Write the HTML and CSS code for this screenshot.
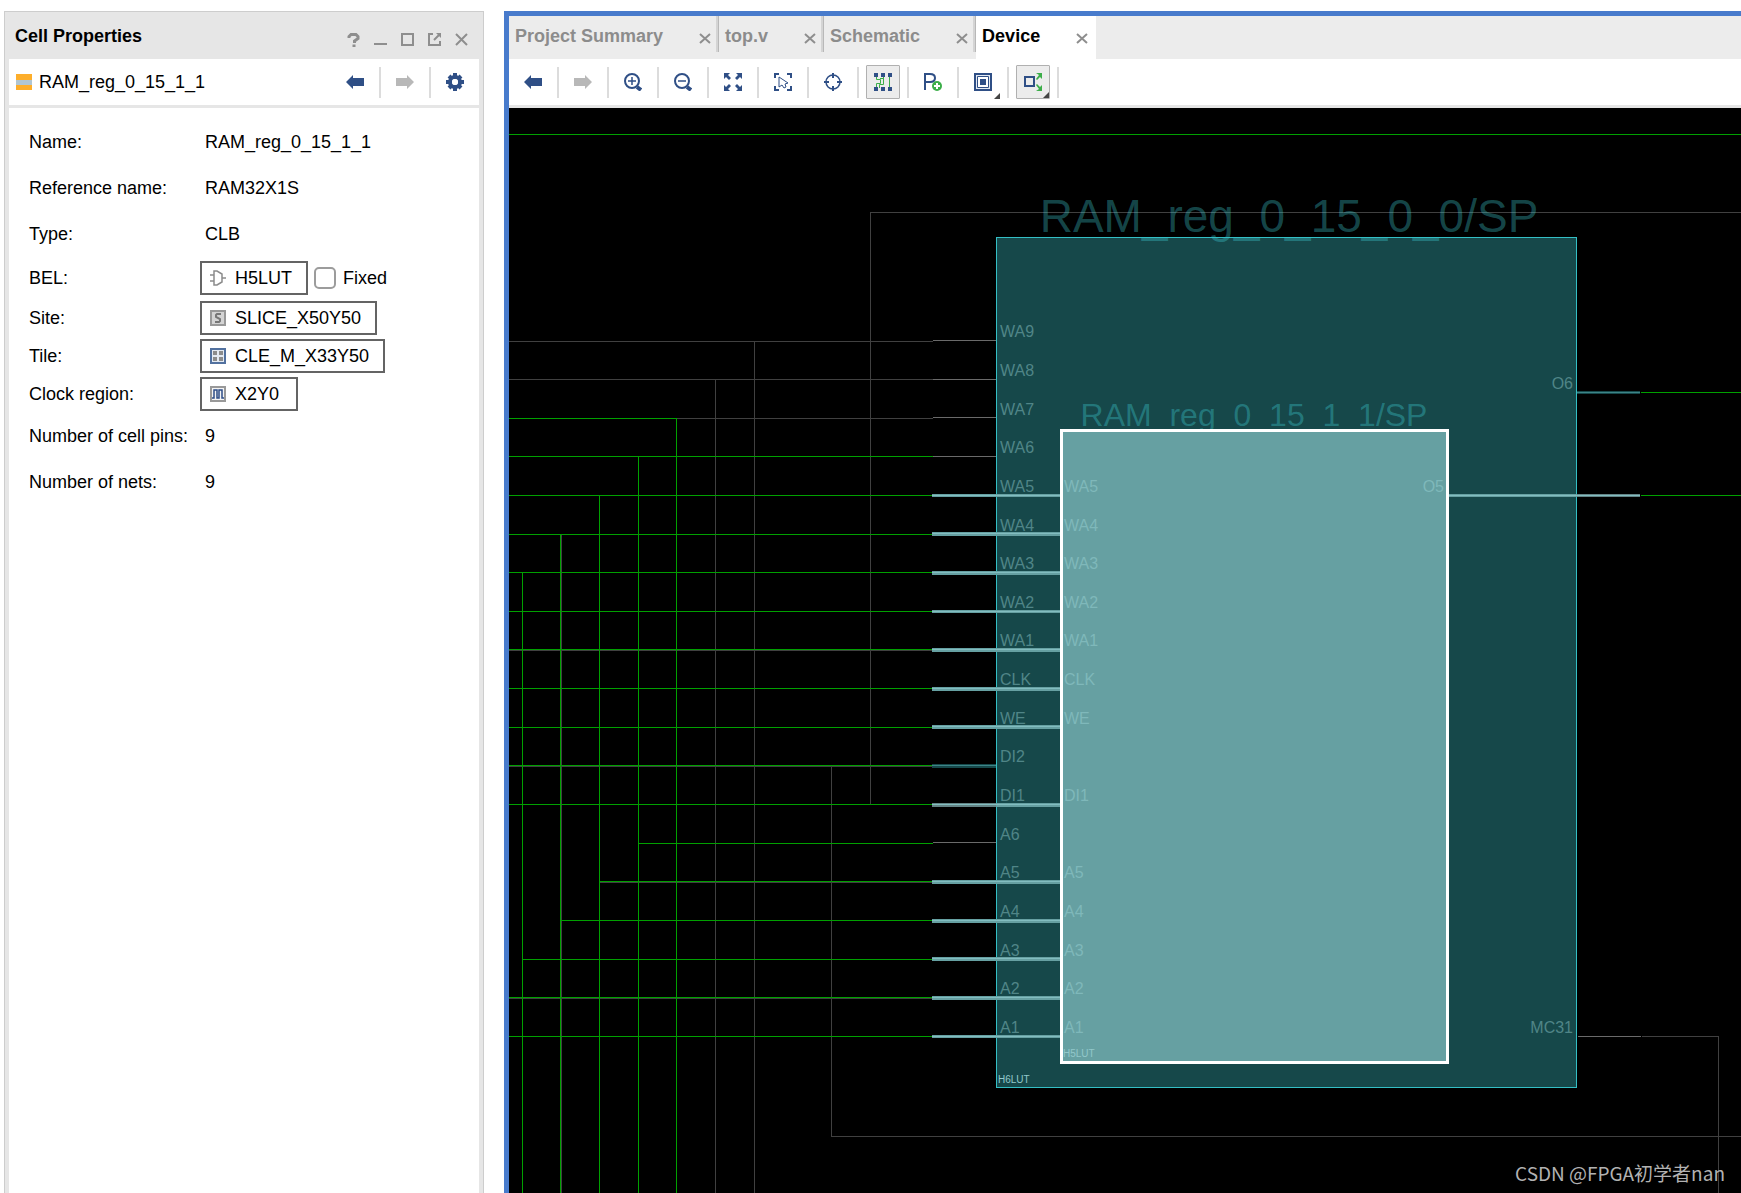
FILE: index.html
```html
<!DOCTYPE html>
<html lang="en">
<head>
<meta charset="utf-8">
<title>Device - Cell Properties</title>
<link rel="stylesheet" href="styles.css">
</head>
<body>
<svg class="defs" aria-hidden="true">
  <symbol id="arrow-left" viewBox="0 0 18 18"><path d="M0 9 7 2v3h11v8H7v3z"/></symbol>
  <symbol id="arrow-right" viewBox="0 0 18 18"><path d="M18 9 11 2v3H0v8h11v3z"/></symbol>
  <symbol id="close" viewBox="0 0 14 14"><path d="M2 3l10 9M12 3 2 12" fill="none" stroke="currentColor" stroke-width="2"/></symbol>
</svg>
<main class="app">
  <section class="panel">
    <header class="panel-head">
      <h2 class="panel-title">Cell Properties</h2>
      <div class="panel-tools">
        <button class="tool" aria-label="Help"><svg width="13" height="14" viewBox="0 0 13 14"><path d="M2 5V3.500L4 1.500h5l2 2v2L7.500 8v2M7 11.500v2.500" fill="none" stroke="currentColor" stroke-width="3"/></svg></button>
        <button class="tool" aria-label="Minimize"><svg width="13" height="13"><path d="M0 10h13v2H0z"/></svg></button>
        <button class="tool" aria-label="Maximize"><svg width="13" height="13"><path d="M1 1h11v11H1z" fill="none" stroke="currentColor" stroke-width="2"/></svg></button>
        <button class="tool" aria-label="Float"><svg width="13" height="13"><path d="M5 1H1v11h11V8M6 7l5-5" fill="none" stroke="currentColor" stroke-width="2"/><path d="M8 0h5v5z"/></svg></button>
        <button class="tool" aria-label="Close"><svg width="13" height="13"><path d="M1 1l11 11M12 1 1 12" fill="none" stroke="currentColor" stroke-width="2"/></svg></button>
      </div>
    </header>
    <div class="toolbar">
      <svg class="cell-icon" width="16" height="16"><path d="M0 0h16v16H0z" fill="#fdae2b"/><path d="M0 6h16v5H0z" fill="#b0c6d3"/></svg>
      <span class="cell-name">RAM_reg_0_15_1_1</span>
      <button class="btn" aria-label="Previous object"><svg width="18" height="18"><use href="#arrow-left"/></svg></button>
      <span class="sep"></span>
      <button class="btn" aria-label="Next object" disabled><svg width="18" height="18"><use href="#arrow-right"/></svg></button>
      <span class="sep"></span>
      <button class="btn" aria-label="Settings"><svg width="18" height="18" viewBox="0 0 18 18"><circle cx="9" cy="9" r="5" fill="none" stroke="currentColor" stroke-width="4"/><path d="M9 0v4M9 14v4M0 9h4M14 9h4M3 3l2 2M13 13l2 2M15 3l-2 2M5 13l-2 2" stroke="currentColor" stroke-width="4"/><circle cx="9" cy="9" r="3" fill="#fff"/></svg></button>
    </div>
    <dl class="props">
      <div class="row"><dt>Name:</dt><dd class="text">RAM_reg_0_15_1_1</dd></div>
      <div class="row"><dt>Reference name:</dt><dd class="text">RAM32X1S</dd></div>
      <div class="row"><dt>Type:</dt><dd class="text">CLB</dd></div>
      <div class="row row-bel"><dt>BEL:</dt><dd>
        <button class="chip"><svg width="16" height="16"><path d="M4 1v14h3l5-3V4L7 1zM0 5h4M0 11h4M12 8h4" fill="none" stroke="#8c8c8c" stroke-width="1.500"/></svg>H5LUT</button>
        <label class="check"><input type="checkbox">Fixed</label>
      </dd></div>
      <div class="row row-chip"><dt>Site:</dt><dd>
        <button class="chip"><svg width="16" height="16"><path d="M1 1h14v14H1z" fill="#d4d4d4" stroke="#999" stroke-width="2"/><path d="M11 4H7L6 5v2l4 2v2l-1 1H5" fill="none" stroke="#777" stroke-width="2"/></svg>SLICE_X50Y50</button>
      </dd></div>
      <div class="row row-chip"><dt>Tile:</dt><dd>
        <button class="chip"><svg width="16" height="16"><path d="M1 1h14v14H1z" fill="#e4eaf2" stroke="#52719f" stroke-width="2"/><path d="M3 3h4v4H3zM9 3h4v4H9zM3 9h4v4H3zM9 9h4v4H9z" fill="#8c8c8c"/></svg>CLE_M_X33Y50</button>
      </dd></div>
      <div class="row row-chip"><dt>Clock region:</dt><dd>
        <button class="chip"><svg width="16" height="16"><path d="M1 1h14v14H1z" fill="#f4f4f4" stroke="#999" stroke-width="2"/><path d="M2 12h2V4h3v8h2V4h3v8h2" fill="none" stroke="#2d4c86" stroke-width="1.500"/></svg>X2Y0</button>
      </dd></div>
      <div class="row"><dt>Number of cell pins:</dt><dd class="text">9</dd></div>
      <div class="row"><dt>Number of nets:</dt><dd class="text">9</dd></div>
    </dl>
  </section>

  <section class="editor">
    <nav class="tabs">
      <div class="tab"><a href="#summary">Project Summary</a><button class="tool" aria-label="Close Project Summary"><svg width="14" height="14"><use href="#close"/></svg></button></div>
      <div class="tab"><a href="#top">top.v</a><button class="tool" aria-label="Close top.v"><svg width="14" height="14"><use href="#close"/></svg></button></div>
      <div class="tab"><a href="#schematic">Schematic</a><button class="tool" aria-label="Close Schematic"><svg width="14" height="14"><use href="#close"/></svg></button></div>
      <div class="tab tab-active"><a href="#device">Device</a><button class="tool" aria-label="Close Device"><svg width="14" height="14"><use href="#close"/></svg></button></div>
    </nav>
    <div class="toolbar">
      <button class="btn" aria-label="Back"><svg width="18" height="18"><use href="#arrow-left"/></svg></button>
      <span class="sep"></span>
      <button class="btn" aria-label="Forward" disabled><svg width="18" height="18"><use href="#arrow-right"/></svg></button>
      <span class="sep"></span>
      <button class="btn" aria-label="Zoom in"><svg width="18" height="18"><circle cx="8" cy="8" r="7" fill="none" stroke="currentColor" stroke-width="2"/><path d="M8 4v8M4 8h8" stroke="currentColor" stroke-width="1.500"/><path d="M13 14l4 3" stroke="currentColor" stroke-width="4"/></svg></button>
      <span class="sep"></span>
      <button class="btn" aria-label="Zoom out"><svg width="18" height="18"><circle cx="8" cy="8" r="7" fill="none" stroke="currentColor" stroke-width="2"/><path d="M4 8h8" stroke="currentColor" stroke-width="1.500"/><path d="M13 14l4 3" stroke="currentColor" stroke-width="4"/></svg></button>
      <span class="sep"></span>
      <button class="btn" aria-label="Zoom fit"><svg width="18" height="18"><path d="M0 0h6L4 2l3 3-2 2-3-3-2 2zM18 0h-6l2 2-3 3 2 2 3-3 2 2zM0 18h6l-2-2 3-3-2-2-3 3-2-2zM18 18h-6l2-2-3-3 2-2 3 3 2-2z"/></svg></button>
      <span class="sep"></span>
      <button class="btn" aria-label="Zoom to selection"><svg width="18" height="18"><path d="M1 5V1h4M13 1h4v4M1 13v4h4M13 17h4v-4" fill="none" stroke="currentColor" stroke-width="2"/><path d="M5 4v10l3-2 2 3 2-1-1-3 3-1z" fill="#fff" stroke="currentColor"/></svg></button>
      <span class="sep"></span>
      <button class="btn" aria-label="Auto-fit selection"><svg width="18" height="18"><circle cx="9" cy="9" r="7" fill="none" stroke="currentColor" stroke-width="1.500"/><path d="M9 0v5M9 13v5M0 9h5M13 9h5" stroke="currentColor" stroke-width="2"/></svg></button>
      <span class="sep"></span>
      <button class="btn btn-on" aria-label="Routing resources"><svg width="18" height="18"><path d="M2.500 3v3.500h4v4h-4V15M9.500 3v8.500h-4V15M6 5.500h3M15.500 3v12" fill="none" stroke="#3cae49" stroke-width="1"/><path d="M0 0h4v4H0zM7 0h4v4H7zM14 0h4v4h-4zM0 14h4v4H0zM7 14h4v4H7zM14 14h4v4h-4z"/></svg></button>
      <span class="sep"></span>
      <button class="btn" aria-label="Place cell"><svg width="18" height="18"><path d="M1 17V1h5q5 0 5 4t-5 4H1" fill="none" stroke="currentColor" stroke-width="2"/><circle cx="13" cy="13" r="5" fill="#3cae49"/><path d="M13 10v6M10 13h6" stroke="#fff" stroke-width="2"/></svg></button>
      <span class="sep"></span>
      <button class="btn menu" aria-label="Show"><svg width="18" height="18"><path d="M1 1h16v16H1z" fill="#e4eaf2" stroke="currentColor" stroke-width="2"/><path d="M3.500 3.500h11v11h-11z" fill="#fff" stroke="currentColor" stroke-width="1"/><path d="M6 6h6v6H6z"/></svg></button>
      <span class="sep"></span>
      <button class="btn btn-on menu" aria-label="Cell connections"><svg width="18" height="18"><path d="M1 4h9v9H1z" fill="none" stroke="currentColor" stroke-width="2"/><path d="M12 0h6v6l-2-2-3 3-1-1 3-4zM12 18h6v-6l-2 2-3-3-1 1 3 4z" fill="#3cae49"/></svg></button>
      <span class="sep"></span>
    </div>
    <div class="canvas">
      <svg class="device" role="img" aria-label="Device view">
        <g transform="translate(-508.500 -107.500)" class="nets">
          <path class="net-off" d="M508 341H932M508 379H932M676 418H932M508 650H932M508 766H932M599 882H932M508 998H932M561 534V5000M715 379V5000M754 341V5000M870 804V212H5000M831 766V1136H5000M1641 1036H1718V5000"/>
          <path class="net-on" d="M508 134H5000M508 418H676V5000M508 456H932M508 495H932M508 534H932M508 572H932M508 611H932M508 649H932M508 688H932M508 727H932M508 765H932M508 804H932M638 843H932M599 881H932M560 920H932M522 959H932M508 997H932M508 1036H932M522 572V5000M560 534V5000M599 495V5000M638 456V5000M1640 392H5000M1640 495H5000"/>
          <path class="pin-off" d="M932 340H995M932 379H995M932 417H995M932 456H995M932 842H995M1577 1036H1640"/>
        </g>
        <g transform="translate(-509 -108)">
          <text class="title title-outer" x="1289" y="232">RAM_reg_0_15_0_0/SP</text>
          <path class="lut-fill" d="M996 237h581v851H996z"/>
          <text class="title title-inner" x="1254" y="426">RAM_reg_0_15_1_1/SP</text>
          <path class="lut-edge" d="M996 237h581v851H996zM997 238v849h579V238z"/>
          <path class="pin-on" d="M932 494h128v3H932zM932 532h128v4H932zM932 571h128v4H932zM932 610h128v3H932zM932 648h128v4H932zM932 687h128v4H932zM932 725h128v4H932zM932 803h128v4H932zM932 880h128v4H932zM932 919h128v4H932zM932 957h128v4H932zM932 996h128v4H932zM932 1035h128v3H932zM1449 494h191v3H1449z"/>
          <path class="pin-muted" d="M932 803h64v4h-64zM1577 494h63v3h-63z"/>
          <path class="pin-core" d="M932 495h128v1H932zM932 533h128v1H932zM932 572h128v1H932zM932 611h128v1H932zM932 649h128v1H932zM932 688h128v1H932zM932 726h128v1H932zM932 804h128v1H932zM932 881h128v1H932zM932 920h128v1H932zM932 958h128v1H932zM932 997h128v1H932zM932 1036h128v1H932zM1449 495h191v1H1449z"/>
          <path class="pin-dark" d="M932 764h64v4h-64zM1577 391h63v3h-63z"/>
          <path class="pin-dark-core" d="M932 765h64v1h-64zM1577 392h63v1h-63z"/>
          <path class="bel-edge" d="M1060 429h389v635h-389z"/>
          <path class="bel-fill" d="M1063 432h383v629h-383z"/>
          <g class="label">
            <text x="1000" y="337">WA9</text><text x="1000" y="376">WA8</text><text x="1000" y="415">WA7</text><text x="1000" y="453">WA6</text>
            <text x="1000" y="492">WA5</text><text x="1000" y="531">WA4</text><text x="1000" y="569">WA3</text><text x="1000" y="608">WA2</text><text x="1000" y="646">WA1</text>
            <text x="1000" y="685">CLK</text><text x="1000" y="724">WE</text><text x="1000" y="762">DI2</text><text x="1000" y="801">DI1</text><text x="1000" y="840">A6</text>
            <text x="1000" y="878">A5</text><text x="1000" y="917">A4</text><text x="1000" y="956">A3</text><text x="1000" y="994">A2</text><text x="1000" y="1033">A1</text>
            <text class="end" x="1573" y="389">O6</text><text class="end" x="1573" y="1033">MC31</text>
          </g>
          <g class="label label-inner">
            <text x="1064" y="492">WA5</text><text x="1064" y="531">WA4</text><text x="1064" y="569">WA3</text><text x="1064" y="608">WA2</text><text x="1064" y="646">WA1</text>
            <text x="1064" y="685">CLK</text><text x="1064" y="724">WE</text><text x="1064" y="801">DI1</text>
            <text x="1064" y="878">A5</text><text x="1064" y="917">A4</text><text x="1064" y="956">A3</text><text x="1064" y="994">A2</text><text x="1064" y="1033">A1</text>
            <text class="end" x="1444" y="492">O5</text>
          </g>
          <text class="bel-name" x="1063" y="1057">H5LUT</text>
          <text class="bel-name" x="998" y="1083">H6LUT</text>
        </g>
      </svg>
      <span class="watermark">CSDN @FPGA初学者nan</span>
    </div>
  </section>
</main>
</body>
</html>
```
FILE: styles.css
```css
* { box-sizing: border-box; }

body {
  margin: 0;
  background: #fff;
  color: #000;
  font: 18px/22px "Liberation Sans", "Noto Sans CJK SC", Arial, sans-serif;
}

svg { display: block; fill: currentColor; }
button { font: inherit; color: inherit; background: none; border: 0; padding: 0; }
.defs { position: absolute; width: 0; height: 0; }

.app {
  display: flex;
  gap: 20px;
  height: 100vh;
  padding: 11px 0 0 4px;
  overflow: hidden;
}

/* Cell properties panel */
.panel {
  display: flex;
  flex-direction: column;
  flex: 0 0 480px;
  padding: 0 4px;
  background: #e6e6e6;
  border: 1px solid #cdcdcd;
  border-bottom: 0;
}

.panel-head {
  display: flex;
  align-items: center;
  justify-content: space-between;
  height: 47px;
  padding: 0 11px 0 6px;
}
.panel-title { margin: 0; font-size: 18px; line-height: 22px; }
.panel-tools { display: flex; gap: 14px; padding-top: 8px; }
.tool { color: #8e8e8e; }

.toolbar {
  display: flex;
  align-items: center;
  gap: 7px;
  height: 49px;
  padding: 0 7px;
  background: #fff;
  border-bottom: 3px solid #e6e6e6;
}
.cell-name { flex: 1; }

.btn {
  display: flex;
  align-items: center;
  justify-content: center;
  flex: none;
  width: 34px;
  height: 34px;
  color: #2f4f86;
}
.btn:disabled { color: #b8b8b8; }
.btn-on { background: #ececec; border: 1px solid #b0b0b0; border-radius: 1px; }
.menu { position: relative; }
.menu::after {
  content: "";
  position: absolute;
  right: 0;
  bottom: 0;
  border: 3px solid #444;
  border-top-color: transparent;
  border-left-color: transparent;
}
.sep { flex: none; width: 2px; height: 31px; background: #dcdcdc; }

.props { flex: 1; margin: 0; padding: 11px 0 0 20px; background: #fff; }
.row { display: grid; grid-template-columns: 171px 1fr; align-items: center; height: 46px; }
.row-bel { height: 42px; }
.row-chip { height: 38px; }
.row dd { display: flex; align-items: center; gap: 6px; margin: 0; }
.row .text { padding-left: 5px; }

.chip {
  display: flex;
  align-items: center;
  gap: 9px;
  min-width: 98px;
  height: 34px;
  padding: 0 14px 0 8px;
  border: 2px solid #646464;
}
.check { display: flex; align-items: center; gap: 7px; }
.check input {
  appearance: none;
  width: 22px;
  height: 22px;
  margin: 0;
  background: #fff;
  border: 2px solid #9c9c9c;
  border-radius: 5px;
}

/* Editor area */
.editor {
  display: flex;
  flex-direction: column;
  flex: 1;
  min-width: 0;
  border: 5px solid #487bcc;
  border-width: 5px 0 0 5px;
}

.tabs { display: flex; height: 43px; background: #ececec; }
.tab {
  position: relative;
  display: flex;
  align-items: center;
  gap: 35px;
  padding: 0 7px 4px 6px;
}
.tab::after {
  content: "";
  position: absolute;
  top: 0;
  right: 0;
  width: 3px;
  height: 36px;
  background: linear-gradient(90deg, #d4d4d4 50%, #b8b8b8 50%);
}
.tab a { color: #8c8c8c; font-weight: bold; text-decoration: none; }
.tab .tool { padding-top: 4px; }
.tab-active { background: #fff; }
.tab-active a { color: #000; }
.tab-active::after { display: none; }

.canvas { position: relative; flex: 1; min-height: 0; background: #000; }
.device { width: 100%; height: 100%; }

.nets { fill: none; shape-rendering: crispEdges; }
.net-off { stroke: #404040; }
.net-on { stroke: #00a000; }
.pin-off { stroke: #6a6a6a; }
.pin-on { fill: #66a0a2; }
.pin-muted { fill: #648486; }
.pin-core { fill: #82bdc0; }
.pin-dark { fill: #16494b; }
.pin-dark-core { fill: #3d8487; }

.title { fill: #42dce2; fill-opacity: 0.33; text-anchor: middle; }
.title-outer { font-size: 46px; }
.title-inner { font-size: 32px; }
.lut-fill { fill: #42dce2; fill-opacity: 0.33; }
.lut-edge { fill: #34bfc5; fill-rule: evenodd; }
.bel-edge { fill: #fff; }
.bel-fill { fill: #66a0a2; }

.label { fill: #508587; font-size: 16px; }
.label-inner { fill: #7fb8ba; }
.end { text-anchor: end; }
.bel-name { fill: #92c8ca; font-size: 10px; }

.watermark {
  position: absolute;
  right: 16px;
  bottom: 5px;
  color: #b2b2b2;
  font: 19px/30px "Noto Sans CJK SC", sans-serif;
}
```
